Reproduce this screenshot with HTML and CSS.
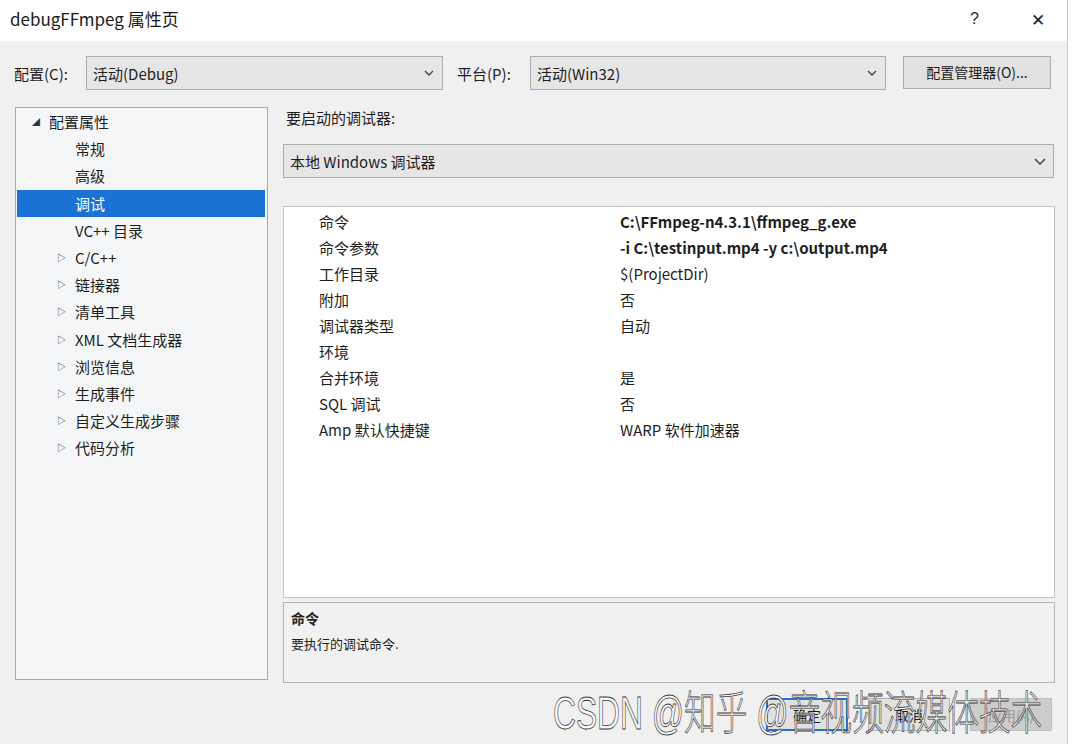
FILE: index.html
```html
<!DOCTYPE html>
<html lang="zh-CN">
<head>
    <meta charset="UTF-8">
    <title>debugFFmpeg 属性页</title>
    <link rel="stylesheet" href="styles.css">
</head>
<body>
<div class="window">

    <!-- Title bar -->
    <div class="titlebar">
        <span class="title">debugFFmpeg 属性页</span>
        <span class="title-btns"><span class="help">?</span><span class="close">✕</span></span>
    </div>

    <!-- Config row -->
    <div class="config-row">
        <span class="label label-cfg">配置(C):</span>
        <div class="select select-cfg"><span>活动(Debug)</span><svg class="chev" width="10" height="6" viewBox="0 0 10 6"><path d="M1 1 L5 5 L9 1" fill="none" stroke="#444" stroke-width="1.4"/></svg></div>
        <span class="label label-plat">平台(P):</span>
        <div class="select select-plat"><span>活动(Win32)</span><svg class="chev" width="10" height="6" viewBox="0 0 10 6"><path d="M1 1 L5 5 L9 1" fill="none" stroke="#444" stroke-width="1.4"/></svg></div>
        <div class="button btn-mgr">配置管理器(O)...</div>
    </div>

    <!-- Main -->
    <div class="main">
        <ul class="tree">
            <li class="tree-item root"><span class="tw tw-open">◢</span>配置属性</li>
            <li class="tree-item leaf">常规</li>
            <li class="tree-item leaf">高级</li>
            <li class="tree-item leaf selected">调试</li>
            <li class="tree-item leaf">VC++ 目录</li>
            <li class="tree-item"><span class="tw">▷</span>C/C++</li>
            <li class="tree-item"><span class="tw">▷</span>链接器</li>
            <li class="tree-item"><span class="tw">▷</span>清单工具</li>
            <li class="tree-item"><span class="tw">▷</span>XML 文档生成器</li>
            <li class="tree-item"><span class="tw">▷</span>浏览信息</li>
            <li class="tree-item"><span class="tw">▷</span>生成事件</li>
            <li class="tree-item"><span class="tw">▷</span>自定义生成步骤</li>
            <li class="tree-item"><span class="tw">▷</span>代码分析</li>
        </ul>

        <div class="right">
            <div class="debugger-label">要启动的调试器:</div>
            <div class="select select-dbg"><span>本地 Windows 调试器</span><svg class="chev" width="12" height="7" viewBox="0 0 12 7"><path d="M1 1 L6 6 L11 1" fill="none" stroke="#444" stroke-width="1.5"/></svg></div>

            <div class="grid">
                <div class="row"><span class="name">命令</span><span class="value bold">C:\FFmpeg-n4.3.1\ffmpeg_g.exe</span></div>
                <div class="row"><span class="name">命令参数</span><span class="value bold">-i C:\testinput.mp4 -y c:\output.mp4</span></div>
                <div class="row"><span class="name">工作目录</span><span class="value">$(ProjectDir)</span></div>
                <div class="row"><span class="name">附加</span><span class="value">否</span></div>
                <div class="row"><span class="name">调试器类型</span><span class="value">自动</span></div>
                <div class="row"><span class="name">环境</span><span class="value"></span></div>
                <div class="row"><span class="name">合并环境</span><span class="value">是</span></div>
                <div class="row"><span class="name">SQL 调试</span><span class="value">否</span></div>
                <div class="row"><span class="name">Amp 默认快捷键</span><span class="value">WARP 软件加速器</span></div>
            </div>

            <div class="desc">
                <div class="desc-title">命令</div>
                <div class="desc-text">要执行的调试命令.</div>
            </div>
        </div>
    </div>

    <!-- Bottom buttons -->
    <div class="footer">
        <div class="button btn-ok">确定</div>
        <div class="button">取消</div>
        <div class="button disabled">应用(A)</div>
    </div>

    <div class="watermark">CSDN @知乎 @音视频流媒体技术</div>
</div>
</body>
</html>
```

FILE: styles.css
```css
body {
    margin: 0;
    padding: 0;
    background-color: #ffffff;
    font-family: "Noto Sans CJK SC", "Noto Sans", sans-serif;
    font-size: 15px;
    color: #1e1e1e;
}
.window {
    position: relative;
    width: 1067px;
    height: 744px;
    background-color: #f0f0f1;
    border-right: 1px solid #c9c9c9;
    overflow: hidden;
}
.titlebar {
    height: 41px;
    background-color: #ffffff;
    display: flex;
    align-items: center;
    justify-content: space-between;
    padding: 0 0 0 10px;
}
.title {
    font-size: 17px;
    color: #1a1a1a;
    margin-top: -4px;
}
.title-btns {
    display: flex;
    align-items: center;
    margin-top: -4px;
}
.help {
    font-size: 16px;
    font-family: "Liberation Sans", sans-serif;
    margin-right: 52px;
}
.close {
    font-size: 17px;
    margin-right: 22px;
}
.config-row {
    display: flex;
    align-items: center;
    padding: 15px 0 0 14px;
    height: 34px;
}
.label {
    font-size: 15px;
}
.label-cfg {
    width: 72px;
}
.label-plat {
    width: 73px;
    margin-left: 14px;
}
.select {
    box-sizing: border-box;
    height: 34px;
    display: flex;
    align-items: center;
    justify-content: space-between;
    padding: 0 8px 0 6px;
    background-color: #e6e6e7;
    border: 1px solid #adadad;
}
.select-cfg {
    width: 357px;
}
.select-plat {
    width: 356px;
}
.chev {
    flex-shrink: 0;
}
.button {
    box-sizing: border-box;
    width: 82px;
    height: 33px;
    display: flex;
    align-items: center;
    justify-content: center;
    background-color: #e1e1e1;
    border: 1px solid #adadad;
    font-size: 14px;
}
.btn-mgr {
    width: 148px;
    margin-left: 17px;
    margin-top: -2px;
}
.main {
    display: flex;
    padding: 17px 0 0 15px;
    gap: 15px;
}
.tree {
    box-sizing: border-box;
    width: 253px;
    height: 573px;
    margin: 0;
    padding: 0 2px 0 1px;
    list-style: none;
    background-color: #f5f6f7;
    border: 1px solid #a9a9a9;
}
.tree-item {
    height: 27.2px;
    line-height: 27px;
    padding-left: 40px;
}
.tree-item.root {
    padding-left: 15px;
}
.tree-item.leaf {
    padding-left: 58px;
}
.tree-item.selected {
    background-color: #1a72d2;
    color: #ffffff;
}
.tw {
    display: inline-block;
    width: 18px;
    font-size: 9px;
    color: #333;
    vertical-align: top;
}
.tw-open {
    font-size: 8px;
    width: 17px;
}
.right {
    width: 772px;
    display: flex;
    flex-direction: column;
}
.debugger-label {
    height: 20px;
    line-height: 20px;
    padding-left: 3px;
    margin-top: 1px;
}
.select-dbg {
    width: 771px;
    margin-top: 16px;
    padding-left: 6px;
    padding-right: 7px;
}
.grid {
    box-sizing: border-box;
    height: 392px;
    margin-top: 28px;
    padding-top: 2px;
    background-color: #ffffff;
    border: 1px solid #c2c2c2;
}
.row {
    display: flex;
    height: 26px;
    line-height: 26px;
}
.name {
    width: 301px;
    padding-left: 35px;
    flex-shrink: 0;
}
.value.bold {
    font-weight: 700;
}
.desc {
    box-sizing: border-box;
    height: 81px;
    margin-top: 4px;
    padding: 2px 0 0 7px;
    background-color: #f1f1f2;
    border: 1px solid #b4b4b4;
}
.desc-title {
    font-weight: 700;
    font-size: 14px;
    line-height: 26px;
}
.desc-text {
    font-size: 13px;
    line-height: 26px;
}
.footer {
    display: flex;
    justify-content: flex-end;
    gap: 20px;
    padding: 15px 15px 0 0;
}
.btn-ok {
    border: 2px solid #2a6fc9;
}
.button.disabled {
    background-color: #cccccc;
    border-color: #bfbfbf;
    color: #9a9a9a;
}
.watermark {
    position: absolute;
    left: 553px;
    top: 676px;
    font-family: "Liberation Sans", "Noto Sans CJK SC", sans-serif;
    font-size: 46px;
    font-weight: 300;
    white-space: nowrap;
    color: rgba(255, 255, 255, 0.85);
    -webkit-text-stroke: 0.8px #3a3a3a;
    transform: scaleX(0.69);
    transform-origin: left top;
}
```
